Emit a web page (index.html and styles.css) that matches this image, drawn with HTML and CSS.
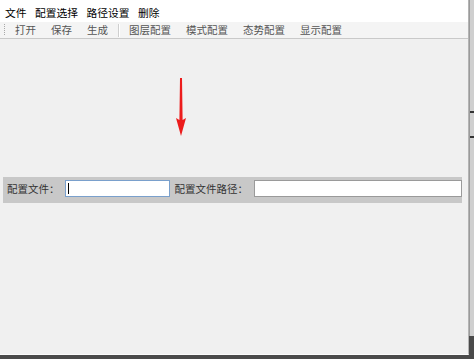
FILE: index.html
```html
<!DOCTYPE html>
<html>
<head>
<meta charset="utf-8">
<link rel="stylesheet" href="styles.css">
</head>
<body>
<div class="screen">
  <div class="window">
    <div class="menubar">
      <span class="menu">文件</span>
      <span class="menu">配置选择</span>
      <span class="menu">路径设置</span>
      <span class="menu">删除</span>
    </div>
    <div class="toolbar">
      <span class="grip"></span>
      <span class="tool t-first">打开</span>
      <span class="tool">保存</span>
      <span class="tool">生成</span>
      <span class="sep"></span>
      <span class="tool t-after-sep">图层配置</span>
      <span class="tool">模式配置</span>
      <span class="tool">态势配置</span>
      <span class="tool">显示配置</span>
    </div>
    <div class="main">
      <svg class="arrow" width="12" height="58" viewBox="0 0 12 58">
        <path d="M5 0 L7 0 L7.6 42 L11 40 L6 58 L1 40 L4.4 42 Z" fill="#ec1c1c"/>
      </svg>
      <div class="panel">
        <span class="label">配置文件：</span>
        <span class="input input-file"><span class="caret"></span></span>
        <span class="label label2">配置文件路径：</span>
        <span class="input input-path"></span>
      </div>
    </div>
  </div>
  <div class="side">
    <span class="tick t1"></span>
    <span class="tick t2"></span>
  </div>
</div>
</body>
</html>
```
FILE: styles.css
```css
html, body {
  margin: 0;
  padding: 0;
}
body {
  width: 474px;
  height: 359px;
  overflow: hidden;
  background: #4a4a4a;
  font-family: "Noto Sans CJK SC", "Noto Sans", sans-serif;
}
.screen {
  display: flex;
  width: 474px;
  height: 359px;
  background: #4a4a4a;
}
.window {
  width: 469px;
  height: 354px;
  background: #f0f0f0;
  border-right: 1px solid #b4b4b4;
  border-bottom: 1px solid #fbfbfb;
  display: flex;
  flex-direction: column;
}
.side {
  width: 4px;
  height: 336px;
  background: #cfcfcf;
  border-left: 1px solid #9a9a9a;
  display: flex;
  flex-direction: column;
}
.tick {
  height: 2px;
  background: #333;
}
.t1 { margin-top: 111px; }
.t2 { margin-top: 23px; }
.menubar {
  height: 22px;
  background: #ffffff;
  display: flex;
  align-items: center;
  padding-left: 5px;
  gap: 8.5px;
  font-size: 10.75px;
  line-height: 14px;
  color: #000;
  padding-top: 4px;
  box-sizing: border-box;
}
.toolbar {
  height: 17px;
  background: #f4f4f4;
  border-bottom: 1px solid #c9c9c9;
  display: flex;
  align-items: center;
  font-size: 10.5px;
  line-height: 14px;
  color: #555;
  box-sizing: border-box;
}
.grip {
  width: 1px;
  height: 12px;
  margin-left: 4px;
  background: repeating-linear-gradient(#a8a8a8 0 1px, transparent 1px 2px);
}
.tool {
  margin-left: 15px;
}
.t-first {
  margin-left: 10px;
}
.sep {
  width: 1px;
  height: 13px;
  background: #cfcfcf;
  border-right: 1px solid #fff;
  margin-left: 10px;
}
.t-after-sep {
  margin-left: 9px;
}
.main {
  flex: 1;
  display: flex;
  flex-direction: column;
}
.arrow {
  margin-top: 39px;
  margin-left: 175px;
  display: block;
}
.panel {
  margin-top: 41px;
  margin-left: 3px;
  width: 459px;
  height: 26px;
  background: #c8c8c8;
  display: flex;
  align-items: flex-start;
  padding-top: 3px;
  box-sizing: border-box;
}
.label {
  font-size: 10.5px;
  line-height: 16px;
  color: #333;
  margin-left: 4px;
  margin-top: 1px;
}
.label2 {
  margin-left: 5px;
}
.input {
  height: 17px;
  background: #fff;
  box-sizing: border-box;
  display: flex;
  align-items: center;
}
.input-file {
  width: 105px;
  margin-left: 5px;
  border: 1px solid #7aa0cc;
}
.input-path {
  width: 208px;
  margin-left: auto;
  border: 1px solid #9a9a9a;
}
.caret {
  width: 1px;
  height: 11px;
  background: #000;
  margin-left: 2px;
}
```
